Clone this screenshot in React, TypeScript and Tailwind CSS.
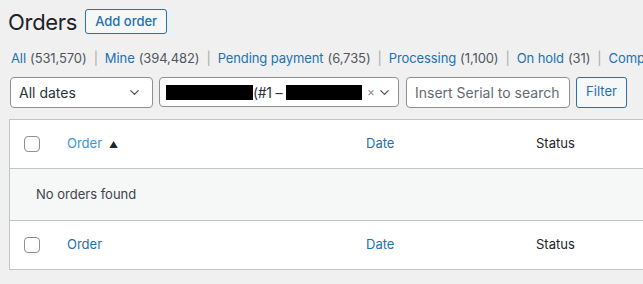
import { ChevronDown } from 'lucide-react'

const statuses = [
  { label: 'All', count: '531,570' },
  { label: 'Mine', count: '394,482' },
  { label: 'Pending payment', count: '6,735' },
  { label: 'Processing', count: '1,100' },
  { label: 'On hold', count: '31' },
  { label: 'Completed', count: '519,216' },
]

function Checkbox() {
  return <span className="block w-4 h-4 rounded-[4px] border border-[#8c8f94] bg-white" />
}

function HeaderRow({ top }: { top: boolean }) {
  return (
    <div className="flex items-center h-12 bg-white">
      <div className="w-[57px] pl-[14px] shrink-0">
        <Checkbox />
      </div>
      <div className="w-[299px] shrink-0 flex items-center gap-[7px]">
        <span className={top ? 'text-[#3a95d3]' : 'text-[#2271b1]'}>Order</span>
        {top && <span className="text-[9px] text-[#1d2327] leading-none">▲</span>}
      </div>
      <div className="w-[170px] shrink-0 text-[#2271b1]">Date</div>
      <div className="text-[#1d2327]">Status</div>
    </div>
  )
}

export default function App() {
  return (
    <div
      className="w-[643px] h-[284px] overflow-hidden bg-[#f0f0f1] text-[13px] text-[#3c434a]"
      style={{ fontFamily: 'Inter, "Noto Sans", sans-serif' }}
    >
      {/* Title */}
      <div className="flex items-center gap-[8px] pl-[8px] pt-[6px] h-[31px] box-content">
        <h1 className="text-[22px] leading-none font-normal text-[#1d2327] tracking-[-0.3px]">Orders</h1>
        <button className="h-[25px] px-[9px] rounded-[3px] border border-[#2271b1] bg-[#f6f7f7] text-[#2271b1] font-medium leading-none">
          Add order
        </button>
      </div>

      {/* Status links */}
      <div className="flex items-center whitespace-nowrap pl-[11px] mt-[13px] h-[18px] tracking-[-0.1px]">
        {statuses.map((s, i) => (
          <span key={s.label} className="flex items-center">
            {i > 0 && <span className="px-[7px] text-[#a7aaad]">|</span>}
            <span className="text-[#2271b1]">{s.label}</span>
            <span className="ml-[4px] text-[#50575e]">({s.count})</span>
          </span>
        ))}
      </div>

      {/* Filters */}
      <div className="flex items-center pl-[10px] mt-[8px] h-[32px]">
        <div className="w-[143px] h-[31px] rounded-[4px] border border-[#8c8f94] bg-white flex items-center justify-between pl-[8px] pr-[10px] text-[14px] text-[#2c3338]">
          <span>All dates</span>
          <ChevronDown size={15} strokeWidth={2} className="text-[#50575e]" />
        </div>
        <div className="ml-[6px] w-[240px] h-[30px] rounded-[4px] border border-[#8c8f94] bg-white flex items-center pl-[6px] pr-[6px] text-[14px] text-[#2c3338]">
          <span className="block w-[87px] h-[15px] bg-black" />
          <span className="tracking-[-0.3px]">(#1 –</span>
          <span className="block ml-[4px] w-[76px] h-[15px] bg-black" />
          <span className="ml-[5px] text-[12px] text-[#8c8f94]">×</span>
          <ChevronDown size={15} strokeWidth={2} className="ml-auto text-[#50575e]" />
        </div>
        <div className="ml-[7px] w-[164px] h-[31px] rounded-[4px] border border-[#8c8f94] bg-white flex items-center px-[8px] text-[14px] text-[#646970]">
          Insert Serial to search
        </div>
        <button className="ml-[6px] w-[51px] h-[31px] rounded-[3px] border border-[#2271b1] bg-[#f6f7f7] text-[#2271b1] text-[13px]">
          Filter
        </button>
      </div>

      {/* Table */}
      <div className="ml-[9px] mt-[11px] border border-[#c3c4c7] border-r-0 bg-white">
        <HeaderRow top />
        <div className="h-[53px] flex items-center pl-[26px] bg-[#f6f7f7] border-y border-[#c3c4c7] text-[#3c434a]">
          No orders found
        </div>
        <HeaderRow top={false} />
      </div>
    </div>
  )
}
